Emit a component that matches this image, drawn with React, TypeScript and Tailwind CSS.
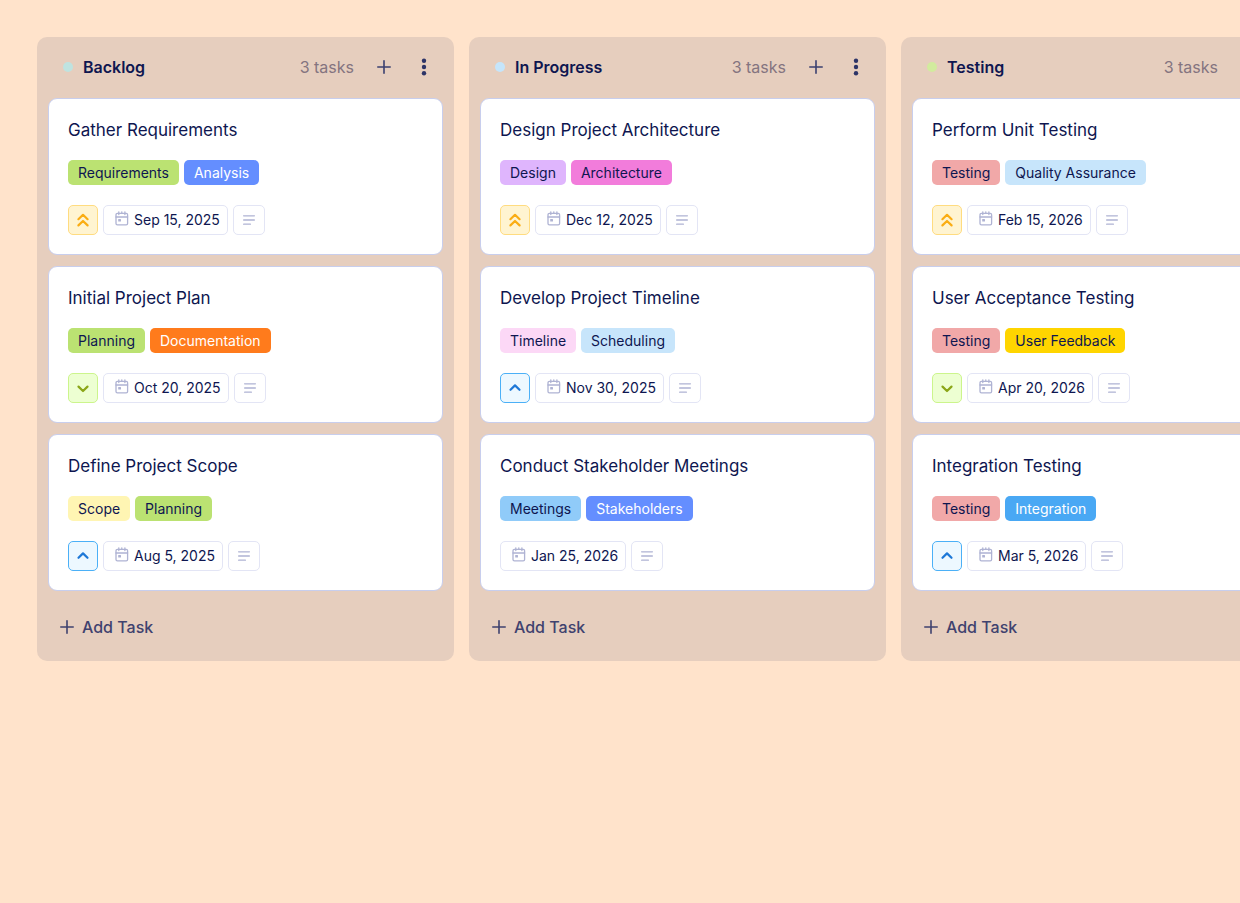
import React from 'react';
import clsx from 'clsx';

type Priority = 'high' | 'medium' | 'low';

interface Tag {
  label: string;
  color: string;
}

interface Task {
  title: string;
  tags: Tag[];
  priority?: Priority;
  date: string;
}

interface BoardColumn {
  name: string;
  dot: string;
  tasks: Task[];
}

const columns: BoardColumn[] = [
  {
    name: 'Backlog',
    dot: 'bg-[#bfe3e0]',
    tasks: [
      {
        title: 'Gather Requirements',
        tags: [
          { label: 'Requirements', color: 'bg-[#bbe272]' },
          { label: 'Analysis', color: 'bg-[#648eff] text-white' },
        ],
        priority: 'high',
        date: 'Sep 15, 2025',
      },
      {
        title: 'Initial Project Plan',
        tags: [
          { label: 'Planning', color: 'bg-[#bbe272]' },
          { label: 'Documentation', color: 'bg-[#ff7b1c] text-white' },
        ],
        priority: 'low',
        date: 'Oct 20, 2025',
      },
      {
        title: 'Define Project Scope',
        tags: [
          { label: 'Scope', color: 'bg-[#fff5b3]' },
          { label: 'Planning', color: 'bg-[#bbe272]' },
        ],
        priority: 'medium',
        date: 'Aug 5, 2025',
      },
    ],
  },
  {
    name: 'In Progress',
    dot: 'bg-[#c5e5fb]',
    tasks: [
      {
        title: 'Design Project Architecture',
        tags: [
          { label: 'Design', color: 'bg-[#dfb5fd]' },
          { label: 'Architecture', color: 'bg-[#f27cdb]' },
        ],
        priority: 'high',
        date: 'Dec 12, 2025',
      },
      {
        title: 'Develop Project Timeline',
        tags: [
          { label: 'Timeline', color: 'bg-[#fcd8f6]' },
          { label: 'Scheduling', color: 'bg-[#c7e5fb]' },
        ],
        priority: 'medium',
        date: 'Nov 30, 2025',
      },
      {
        title: 'Conduct Stakeholder Meetings',
        tags: [
          { label: 'Meetings', color: 'bg-[#90cbf9]' },
          { label: 'Stakeholders', color: 'bg-[#648eff] text-white' },
        ],
        date: 'Jan 25, 2026',
      },
    ],
  },
  {
    name: 'Testing',
    dot: 'bg-[#d2eb9e]',
    tasks: [
      {
        title: 'Perform Unit Testing',
        tags: [
          { label: 'Testing', color: 'bg-[#f1a8a8]' },
          { label: 'Quality Assurance', color: 'bg-[#c7e5fb]' },
        ],
        priority: 'high',
        date: 'Feb 15, 2026',
      },
      {
        title: 'User Acceptance Testing',
        tags: [
          { label: 'Testing', color: 'bg-[#f1a8a8]' },
          { label: 'User Feedback', color: 'bg-[#ffd500]' },
        ],
        priority: 'low',
        date: 'Apr 20, 2026',
      },
      {
        title: 'Integration Testing',
        tags: [
          { label: 'Testing', color: 'bg-[#f1a8a8]' },
          { label: 'Integration', color: 'bg-[#49a8f4] text-white' },
        ],
        priority: 'medium',
        date: 'Mar 5, 2026',
      },
    ],
  },
];

const priorityStyles: Record<Priority, { button: string; paths: string[] }> = {
  high: {
    button: 'border-[#ffdc80] bg-[#fff4d1] text-[#faad14]',
    paths: ['M2.4 6.2 7 1.8 11.6 6.2', 'M2.4 12.4 7 8 11.6 12.4'],
  },
  medium: {
    button: 'border-[#4bb0f7] bg-[#edf8ff] text-[#1e78d7]',
    paths: ['M2.5 8.8 7 4.4 11.5 8.8'],
  },
  low: {
    button: 'border-[#ccf58c] bg-[#edffd2] text-[#8ba618]',
    paths: ['M2.5 5.6 7 10 11.5 5.6'],
  },
};

function PlusIcon() {
  return (
    <svg className="h-4 w-4" viewBox="0 0 16 16" fill="none" stroke="currentColor" strokeWidth="1.6" strokeLinecap="round" aria-hidden="true">
      <path d="M8 1.8v12.4M1.8 8h12.4" />
    </svg>
  );
}

function MoreIcon() {
  return (
    <svg className="h-[18px] w-[18px]" viewBox="0 0 18 18" fill="currentColor" aria-hidden="true">
      <circle cx="9" cy="2.7" r="2.2" />
      <circle cx="9" cy="9" r="2.2" />
      <circle cx="9" cy="15.3" r="2.2" />
    </svg>
  );
}

function CalendarIcon() {
  return (
    <svg className="h-[15px] w-[14px]" viewBox="0 0 14 15" fill="none" stroke="currentColor" strokeWidth="1.3" strokeLinecap="round" aria-hidden="true">
      <rect x="1" y="2.4" width="11.6" height="11.4" rx="1.4" />
      <path d="M1 6h11.6M3.8 0.8v2.8M9.9 0.8v2.8M6.8 0.8v1.6" />
      <rect x="3.2" y="8" width="2.8" height="2.4" rx="0.5" fill="currentColor" stroke="none" />
    </svg>
  );
}

function NotesIcon() {
  return (
    <svg className="h-3 w-3" viewBox="0 0 12 12" fill="none" stroke="currentColor" strokeWidth="1.3" strokeLinecap="round" aria-hidden="true">
      <path d="M0.6 1.8h10.8M0.6 6h10.8M0.6 10.2h6.8" />
    </svg>
  );
}

function PriorityButton({ priority }: { priority: Priority }) {
  const { button, paths } = priorityStyles[priority];

  return (
    <button
      aria-label={`Priority: ${priority}`}
      className={clsx('flex h-[30px] w-[30px] items-center justify-center rounded-[5px] border', button)}
    >
      <svg className="h-3.5 w-3.5" viewBox="0 0 14 14" fill="none" stroke="currentColor" strokeWidth="2.2" strokeLinecap="round" strokeLinejoin="round" aria-hidden="true">
        {paths.map((d) => (
          <path key={d} d={d} />
        ))}
      </svg>
    </button>
  );
}

function TaskCard({ task }: { task: Task }) {
  return (
    <article className="rounded-[9px] border border-[#c8ceed] bg-white px-[19px] py-[19px]">
      <h3 className="text-[17px] leading-6">{task.title}</h3>
      <ul className="mt-[18px] flex gap-[5px]">
        {task.tags.map((tag) => (
          <li key={tag.label} className={clsx('rounded-[5px] px-2.5 text-sm leading-[25px]', tag.color)}>
            {tag.label}
          </li>
        ))}
      </ul>
      <div className="mt-5 flex gap-[5px]">
        {task.priority && <PriorityButton priority={task.priority} />}
        <button className="flex h-[30px] items-center gap-[5px] rounded-[5px] border border-[#e3e5f5] pr-[7px] pl-[11px] text-sm">
          <span className="pb-[3px] text-[#afb3d3]">
            <CalendarIcon />
          </span>
          {task.date}
        </button>
        <button
          aria-label="Description"
          className="flex h-[30px] w-8 items-center justify-center rounded-[5px] border border-[#e3e5f5] text-[#afb3d3]"
        >
          <NotesIcon />
        </button>
      </div>
    </article>
  );
}

function Column({ column }: { column: BoardColumn }) {
  return (
    <section className="w-[417px] shrink-0 rounded-[10px] bg-[#e6cebe] px-[11px]">
      <header className="mb-px flex h-[60px] items-center pr-2.5 pl-[15px]">
        <span className={clsx('h-2.5 w-2.5 rounded-full', column.dot)} />
        <h2 className="ml-2.5 text-base font-semibold">{column.name}</h2>
        <span className="ml-auto text-base text-[#847480]">{column.tasks.length} tasks</span>
        <button aria-label="Add task" className="ml-[22px] text-[#3b4070]">
          <PlusIcon />
        </button>
        <button aria-label="Column options" className="ml-[23px] text-[#2d3467]">
          <MoreIcon />
        </button>
      </header>
      <div className="flex flex-col gap-[11px]">
        {column.tasks.map((task) => (
          <TaskCard key={task.title} task={task} />
        ))}
      </div>
      <button className="mt-4 mb-[14px] ml-[11px] flex h-10 items-center gap-[7px] text-base font-medium text-[#3f426f]">
        <PlusIcon />
        Add Task
      </button>
    </section>
  );
}

function App() {
  return (
    <main className="flex min-h-screen items-start gap-[15px] overflow-x-hidden bg-[#ffe3cb] p-[37px] font-['Inter',sans-serif] text-[#0e1650]">
      {columns.map((column) => (
        <Column key={column.name} column={column} />
      ))}
    </main>
  );
}

export default App;
